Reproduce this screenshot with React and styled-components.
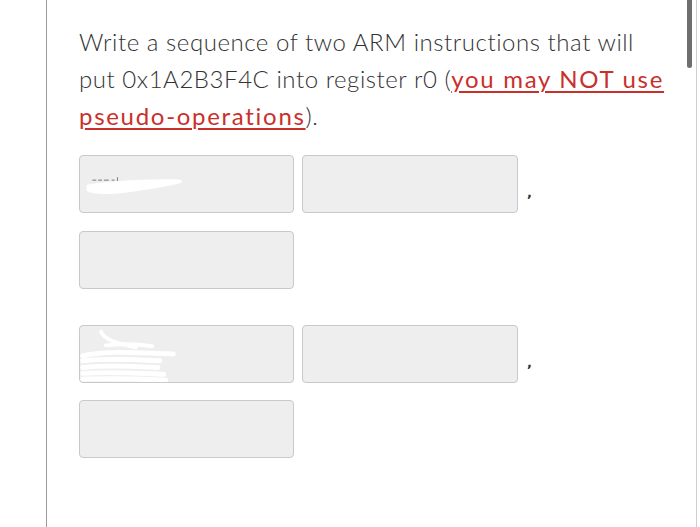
import React from "react";
import styled, { createGlobalStyle } from "styled-components";

const Global = createGlobalStyle`
  html, body { margin: 0; padding: 0; background: #ffffff; }
  body { font-family: Lato, "Noto Sans", sans-serif; overflow: hidden; }
`;

const Page = styled.div`
  display: flex;
  width: 700px;
  height: 527px;
  background: #fff;
`;

const Panel = styled.div`
  position: relative;
  margin-left: 46px;
  width: 651px;
  height: 527px;
  border-left: 1.5px solid #9a9a9a;
  border-right: 1px solid #cfcfcf;
  box-sizing: border-box;
  padding: 23px 0 0 32px;
`;

const Question = styled.p`
  margin: 0;
  white-space: nowrap;
  font-family: Lato, "Noto Sans", sans-serif;
  font-weight: 300;
  font-size: 24px;
  line-height: 37px;
  color: #333;
  letter-spacing: 0.55px;
`;

const Link = styled.a`
  color: #c9302c;
  font-weight: 400;
  letter-spacing: 1.7px;
  text-decoration: underline;
  text-decoration-thickness: 2px;
  text-underline-offset: 3px;
`;

const Answers = styled.div`
  display: flex;
  flex-direction: column;
  margin-top: 21px;
`;

const Row = styled.div`
  display: flex;
  align-items: flex-end;
  gap: 8px;
  margin-top: ${(p) => p.$top || 0}px;
`;

const Field = styled.div`
  position: relative;
  width: ${(p) => p.$w}px;
  height: 58px;
  box-sizing: border-box;
  background: #eeeeee;
  border: 1.5px solid #c9c9c9;
  border-radius: 4px;
  overflow: hidden;
`;

const Comma = styled.span`
  font-family: "DejaVu Sans", sans-serif;
  font-size: 13px;
  font-weight: bold;
  color: #333;
  line-height: 1;
  margin-left: 1px;
  margin-bottom: 14px;
`;

const Scribble = styled.svg`
  position: absolute;
  left: 0;
  top: 0;
  width: 100%;
  height: 100%;
`;

const Thumb = styled.div`
  position: absolute;
  right: 4px;
  top: -4px;
  width: 5px;
  height: 72px;
  border-radius: 3px;
  background: #6f6f6f;
`;

function ScribbleOne() {
  return (
    <Scribble viewBox="0 0 215 58">
      <g stroke="#5a5a5a" strokeWidth="0.8">
        <line x1="10" y1="25" x2="14" y2="25" />
        <line x1="16" y1="25" x2="20" y2="25" />
        <line x1="22" y1="25" x2="27" y2="25" />
        <line x1="30" y1="25" x2="33" y2="25" />
        <line x1="36" y1="22" x2="36" y2="27" />
      </g>
      <path
        d="M4 30 C20 26, 60 24, 96 24 C104 24, 106 27, 98 29 C80 33, 60 36, 44 38 C30 40, 8 40, 4 36 Z"
        fill="#ffffff"
      />
    </Scribble>
  );
}

function ScribbleTwo() {
  return (
    <Scribble viewBox="0 0 215 58">
      <g fill="#555">
        <circle cx="22" cy="28" r="0.6" />
        <circle cx="26" cy="28" r="0.6" />
        <circle cx="29" cy="28" r="0.7" />
        <circle cx="33" cy="29" r="0.7" />
      </g>
      <g stroke="#ffffff" strokeLinecap="round" fill="none">
        <path d="M19 6 C22 14, 35 18, 55 22" strokeWidth="4" />
        <path d="M24 20 C45 18, 60 19, 72 21" strokeWidth="4" />
        <path d="M0 31 C20 26, 50 27, 94 29" strokeWidth="5" />
        <path d="M0 36 C30 33, 60 35, 80 36" strokeWidth="5" />
        <path d="M0 43 C30 40, 55 42, 78 43" strokeWidth="5" />
        <path d="M0 49 C30 47, 60 49, 84 50" strokeWidth="5" />
        <path d="M0 55 C30 54, 60 55, 86 56" strokeWidth="5" />
      </g>
    </Scribble>
  );
}

export default function App() {
  return (
    <>
      <Global />
      <Page>
        <Panel>
          <Question>
            Write a sequence of two ARM instructions that will
            <br />
            put 0x1A2B3F4C into register r0 (<Link href="#">you may NOT use</Link>
            <br />
            <Link href="#">pseudo-operations</Link>).
          </Question>
          <Answers>
            <Row>
              <Field $w={215}>
                <ScribbleOne />
              </Field>
              <Field $w={216} />
              <Comma>,</Comma>
            </Row>
            <Row $top={18}>
              <Field $w={215} />
            </Row>
            <Row $top={36}>
              <Field $w={215}>
                <ScribbleTwo />
              </Field>
              <Field $w={216} />
              <Comma>,</Comma>
            </Row>
            <Row $top={17}>
              <Field $w={215} />
            </Row>
          </Answers>
          <Thumb />
        </Panel>
      </Page>
    </>
  );
}
